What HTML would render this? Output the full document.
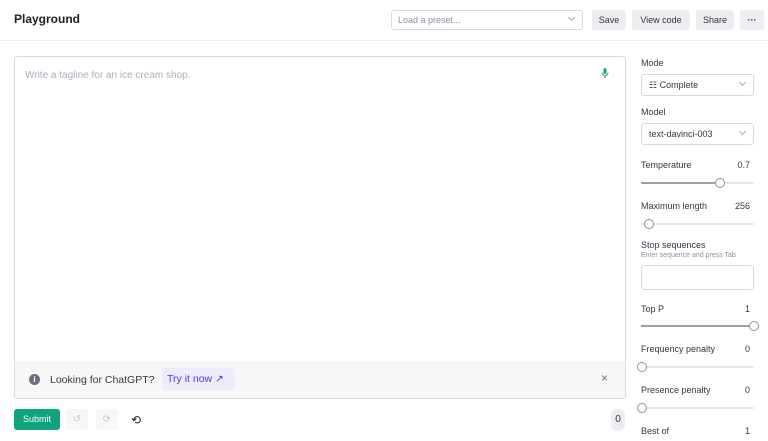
<!DOCTYPE html>
<html><head><style>
*{box-sizing:border-box;margin:0;padding:0}
body{width:768px;height:441px;overflow:hidden;background:#fff;font-family:"Liberation Sans",sans-serif;color:#353740;position:relative;font-size:9px}
.a{position:absolute}
.btn{position:absolute;top:10px;height:20px;background:#ececf1;border-radius:3px;font-size:9px;line-height:20px;text-align:center;color:#353740}
.lbl{position:absolute;left:641px;font-size:9px;color:#353740}
.val{position:absolute;right:18px;font-size:9px;color:#353740}
.tr{position:absolute;left:641px;width:113px;height:2px;background:#e5e5ea;border-radius:1px}
.fill{position:absolute;left:0;top:0;height:2px;background:#a0a0ab}
.th{position:absolute;top:-4px;width:10px;height:10px;border:1px solid #8e8ea0;border-radius:50%;background:#fff}
.sel{position:absolute;left:641px;width:113px;height:22px;border:1px solid #d9d9e3;border-radius:3px;font-size:9px;line-height:20px;padding-left:7px}
.chev{position:absolute;right:8px;top:5px;width:5px;height:5px;border-right:1px solid #aaa;border-bottom:1px solid #aaa;transform:rotate(45deg)}
</style></head><body>
<div class="a" style="left:14px;top:12px;font-size:12px;font-weight:bold;color:#202123">Playground</div>
<div class="a" style="left:391px;top:10px;width:192px;height:20px;border:1px solid #d9d9e3;border-radius:3px;font-size:9px;line-height:18px;padding-left:6px;color:#8e8ea0">Load a preset...<div class="chev" style="top:4px"></div></div>
<div class="btn" style="left:592px;width:34px">Save</div>
<div class="btn" style="left:632px;width:58px">View code</div>
<div class="btn" style="left:696px;width:38px">Share</div>
<div class="btn" style="left:740px;width:24px;font-weight:bold">···</div>
<div class="a" style="left:0;top:40px;width:768px;height:1px;background:#ececf1"></div>

<div class="a" style="left:14px;top:56px;width:612px;height:343px;border:1px solid #d9d9e3;border-radius:3px;overflow:hidden">
 <div class="a" style="left:10px;top:13px;font-size:10px;color:#acacbe">Write a tagline for an ice cream shop.</div>
 <svg class="a" style="left:586px;top:10px" width="8" height="12" viewBox="0 0 8 12"><rect x="2.5" y="1" width="3" height="6" rx="1.5" fill="#10a37f"/><path d="M1 5.5a3 3 0 0 0 6 0M4 8.5v2.5" stroke="#10a37f" fill="none"/></svg>
 <div class="a" style="left:0;top:304px;width:612px;height:38px;background:#f7f7f8">
  <div class="a" style="left:14px;top:13px;width:11px;height:11px;border-radius:50%;background:#6e6e80;color:#fff;font-size:8px;line-height:11px;text-align:center;font-weight:bold">i</div>
  <div class="a" style="left:35px;top:13px;font-size:10.5px;color:#353740">Looking for ChatGPT?</div>
  <div class="a" style="left:147px;top:7px;width:73px;height:22px;background:#ececfb;border-radius:3px;font-size:10.5px;line-height:22px;padding-left:5px;color:#5436da">Try it now ↗</div>
  <div class="a" style="left:586px;top:10px;font-size:12px;color:#6e6e80">×</div>
 </div>
</div>

<div class="a" style="left:14px;top:409px;width:46px;height:21px;background:#10a37f;border-radius:3px;color:#fff;font-size:9px;line-height:21px;text-align:center">Submit</div>
<div class="a" style="left:66px;top:409px;width:22px;height:21px;background:#f7f7f8;border-radius:3px;color:#c5c5d2;font-size:10px;line-height:21px;text-align:center">↺</div>
<div class="a" style="left:96px;top:409px;width:22px;height:21px;background:#f7f7f8;border-radius:3px;color:#c5c5d2;font-size:10px;line-height:21px;text-align:center">⟳</div>
<div class="a" style="left:131px;top:413px;font-size:12px;color:#202123">⟲</div>
<div class="a" style="left:611px;top:409px;width:14px;height:22px;background:#ececf1;border-radius:7px;font-size:10px;line-height:22px;text-align:center">0</div>

<div class="lbl" style="top:58px">Mode</div>
<div class="sel" style="top:74px">☷ Complete<div class="chev"></div></div>
<div class="lbl" style="top:107px">Model</div>
<div class="sel" style="top:123px">text-davinci-003<div class="chev"></div></div>
<div class="lbl" style="top:160px">Temperature</div><div class="val" style="top:160px">0.7</div>
<div class="tr" style="top:182px"><div class="fill" style="width:78px"></div><div class="th" style="left:74px"></div></div>
<div class="lbl" style="top:201px">Maximum length</div><div class="val" style="top:201px">256</div>
<div class="tr" style="top:223px"><div class="th" style="left:3px"></div></div>
<div class="lbl" style="top:240px">Stop sequences</div>
<div class="lbl" style="top:252px;font-size:7px;color:#8e8ea0">Enter sequence and press Tab</div>
<div class="a" style="left:641px;top:265px;width:113px;height:25px;border:1px solid #d9d9e3;border-radius:3px"></div>
<div class="lbl" style="top:304px">Top P</div><div class="val" style="top:304px">1</div>
<div class="tr" style="top:325px"><div class="fill" style="width:113px"></div><div class="th" style="left:108px"></div></div>
<div class="lbl" style="top:344px">Frequency penalty</div><div class="val" style="top:344px">0</div>
<div class="tr" style="top:366px"><div class="th" style="left:-4px"></div></div>
<div class="lbl" style="top:385px">Presence penalty</div><div class="val" style="top:385px">0</div>
<div class="tr" style="top:407px"><div class="th" style="left:-4px"></div></div>
<div class="lbl" style="top:426px">Best of</div><div class="val" style="top:426px">1</div>
</body></html>
